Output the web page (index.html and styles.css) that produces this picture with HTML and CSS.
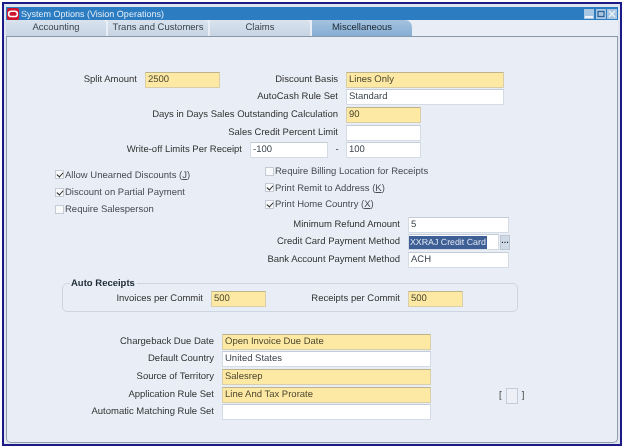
FILE: index.html
```html
<!DOCTYPE html>
<html lang="en">
<head>
<meta charset="utf-8">
<title>System Options</title>
<link rel="stylesheet" href="styles.css">
</head>
<body>
<div class="window">
  <div class="title">
    <span class="logo"><svg width="12" height="12" viewBox="0 0 12 12"><rect width="12" height="12" rx="2" fill="#d0142c"/><rect x="1.6" y="3.2" width="8.8" height="5.4" rx="2.7" fill="none" stroke="#fff" stroke-width="1.5"/></svg></span>
    <span class="title-text">System Options (Vision Operations)</span>
    <span class="controls">
      <svg width="10" height="10" viewBox="0 0 10 10"><rect width="10" height="10" fill="#a9c6e2"/><rect x="1" y="7" width="8" height="2" fill="#eef4fa"/></svg>
      <svg width="10" height="10" viewBox="0 0 10 10"><rect width="10" height="10" fill="#a9c6e2"/><rect x="2" y="2.5" width="6" height="5" fill="none" stroke="#2c5f93" stroke-width="1.2"/></svg>
      <svg width="10" height="10" viewBox="0 0 10 10"><rect width="10" height="10" fill="#a9c6e2"/><path d="M2 2l6 6M8 2l-6 6" stroke="#eef4fa" stroke-width="1.4"/></svg>
    </span>
  </div>
  <div class="tabs">
    <div class="tab">Accounting</div>
    <div class="tab">Trans and Customers</div>
    <div class="tab">Claims</div>
    <div class="tab active">Miscellaneous</div>
  </div>
  <div class="panel">
    <section class="top">
      <div class="row">
        <label class="lab l-split">Split Amount</label>
        <span class="field req w-75">2500</span>
        <label class="lab l-basis">Discount Basis</label>
        <span class="field req w-158">Lines Only</span>
      </div>
      <div class="row">
        <label class="lab l-main">AutoCash Rule Set</label>
        <span class="field w-158">Standard</span>
      </div>
      <div class="row">
        <label class="lab l-main">Days in Days Sales Outstanding Calculation</label>
        <span class="field req w-75">90</span>
      </div>
      <div class="row">
        <label class="lab l-main">Sales Credit Percent Limit</label>
        <span class="field w-75"></span>
      </div>
      <div class="row">
        <label class="lab l-write">Write-off Limits Per Receipt</label>
        <span class="field w-78">-100</span>
        <span class="dash">-</span>
        <span class="field w-75">100</span>
      </div>
    </section>

    <section class="middle">
      <div class="col-left">
        <div class="check"><span class="box on"></span>Allow Unearned Discounts (<u>J</u>)</div>
        <div class="check"><span class="box on"></span>Discount on Partial Payment</div>
        <div class="check"><span class="box"></span>Require Salesperson</div>
      </div>
      <div class="col-right">
        <div class="check tight"><span class="box"></span>Require Billing Location for Receipts</div>
        <div class="check tight"><span class="box on"></span>Print Remit to Address (<u>K</u>)</div>
        <div class="check tight"><span class="box on"></span>Print Home Country (<u>X</u>)</div>
        <div class="refund-rows">
          <div class="row">
            <label class="lab l-refund">Minimum Refund Amount</label>
            <span class="field w-101">5</span>
          </div>
          <div class="row">
            <label class="lab l-refund">Credit Card Payment Method</label>
            <span class="field w-91 flush"><span class="selected">XXRAJ Credit Card</span></span>
            <span class="lov">&#8230;</span>
          </div>
          <div class="row">
            <label class="lab l-refund">Bank Account Payment Method</label>
            <span class="field w-101">ACH</span>
          </div>
        </div>
      </div>
    </section>

    <fieldset class="group">
      <legend>Auto Receipts</legend>
      <div class="row">
        <label class="lab l-inv">Invoices per Commit</label>
        <span class="field req w-55">500</span>
        <label class="lab l-rec">Receipts per Commit</label>
        <span class="field req w-55">500</span>
      </div>
    </fieldset>

    <section class="bottom">
      <div class="bottom-rows">
        <div class="row"><label class="lab l-bot">Chargeback Due Date</label><span class="field req w-209">Open Invoice Due Date</span></div>
        <div class="row"><label class="lab l-bot">Default Country</label><span class="field w-209">United States</span></div>
        <div class="row"><label class="lab l-bot">Source of Territory</label><span class="field req w-209">Salesrep</span></div>
        <div class="row"><label class="lab l-bot">Application Rule Set</label><span class="field req w-209">Line And Tax Prorate</span></div>
        <div class="row"><label class="lab l-bot">Automatic Matching Rule Set</label><span class="field w-209"></span></div>
      </div>
      <div class="flex-slot"><span>[</span><span class="slot"></span><span>]</span></div>
    </section>
  </div>
</div>
</body>
</html>
```
FILE: styles.css
```css
* { box-sizing: border-box; }
html, body { margin: 0; padding: 0; background: #fff; }
body {
  width: 624px;
  height: 448px;
  padding: 2px;
  font: 9.5px/12px "Liberation Sans", Arial, sans-serif;
  text-rendering: geometricPrecision;
  color: #333;
  overflow: hidden;
}
.window {
  width: 620px;
  height: 444px;
  border: 2px solid #1c1a86;
  background: #dfe6f0;
  padding: 3px 2px 0 2px;
  display: flex;
  flex-direction: column;
  filter: blur(0.3px);
}
.title {
  height: 13px;
  background: #2b7cc1;
  color: #e4eef8;
  display: flex;
  align-items: center;
  flex: none;
  font-size: 9px;
}
.logo { display: flex; width: 15px; flex: none; padding-left: 1px; }
.controls { margin-left: auto; display: flex; gap: 1.5px; padding-right: 1px; }
.tabs {
  height: 17px;
  flex: none;
  display: flex;
  gap: 2px;
  background: #e9eef6;
  border-bottom: 1px solid #8a97a6;
}
.tab {
  width: 100px;
  background: linear-gradient(#d9e3ee, #c7d4e3);
  color: #3c4650;
  text-align: center;
  line-height: 16px;
  border-top-right-radius: 4px;
}
.tab.active {
  background: linear-gradient(#a4c2df, #86aed3);
  color: #1e2a36;
  border-top-right-radius: 7px;
}
.panel {
  flex: 1;
  background: #e9eef6;
  border: 1px solid #8f9cad;
  border-top: 0;
  border-radius: 0 0 5px 5px;
  margin-bottom: 1px;
  padding-top: 34px;
  min-height: 0;
}
.row {
  display: flex;
  align-items: center;
  height: 17.6px;
}
.lab { text-align: right; padding-right: 8px; flex: none; white-space: nowrap; }
.l-split { width: 138px; }
.l-basis { width: 126px; }
.l-main { width: 339px; }
.l-write { width: 243px; }
.l-refund { width: 143px; }
.l-inv { width: 148px; }
.l-rec { width: 142px; }
.l-bot { width: 215px; }
.field {
  flex: none;
  height: 16px;
  display: flex;
  align-items: center;
  background: #fff;
  border: 1px solid #d5dbe4;
  border-top-color: #c4ccd6;
  padding: 0 0 0 2px;
  color: #3d4650;
  white-space: nowrap;
  overflow: hidden;
}
.field.flush { padding-left: 0; }
.field.req {
  background: #fde8a4;
  border-color: #d8cfa8;
  border-top-color: #bdb48c;
  color: #4d4a30;
}
.w-55 { width: 55px; }
.w-75 { width: 75px; }
.w-78 { width: 78px; }
.w-91 { width: 91px; }
.w-101 { width: 101px; }
.w-158 { width: 158px; }
.w-209 { width: 209px; }
.dash { width: 18px; text-align: center; flex: none; }
.middle { display: flex; margin-top: 5px; height: 113px; }
.col-left { width: 258px; padding: 3px 0 0 48px; flex: none; }
.col-right { flex: 1; }
.check { display: flex; align-items: center; height: 17.4px; color: #474d55; white-space: nowrap; }
.check.tight { height: 16.6px; }
.box {
  width: 9px;
  height: 9px;
  margin-top: -2px;
  background: #f7f9fb;
  border: 1px solid #c4cbd4;
  margin-right: 1px;
  flex: none;
  position: relative;
}
.box.on::after {
  content: "";
  position: absolute;
  left: 1px;
  top: 1px;
  width: 5px;
  height: 3px;
  border-left: 1.5px solid #222;
  border-bottom: 1.5px solid #222;
  transform: rotate(-48deg);
}
.refund-rows { margin-top: 2px; }
.selected { background: #3e5f95; color: #dfe6f2; padding: 0 1px; line-height: 13px; font-size: 8.8px; }
.lov {
  width: 10px;
  height: 15px;
  margin-left: 1px;
  flex: none;
  background: #cfdae6;
  border: 1px solid #bcc7d4;
  color: #223;
  text-align: center;
  font-weight: bold;
  line-height: 10px;
  font-size: 8px;
}
.group {
  margin: 1px 0 0 55px;
  padding: 1px 0 0;
  width: 456px;
  height: 34px;
  border: 1px solid #cdd5e0;
  border-radius: 5px;
}
.group legend {
  margin-left: 7px;
  padding: 0 2px 0 1px;
  font-weight: bold;
  color: #1e2a36;
  line-height: 11px;
}
.bottom { display: flex; margin-top: 21px; }
.bottom-rows { width: 470px; }
.flex-slot {
  display: flex;
  align-items: center;
  gap: 4px;
  height: 20px;
  margin-top: 53px;
  margin-left: 22px;
  color: #444;
}
.slot { width: 12px; height: 16px; background: #edf1f7; border: 1px solid #c4ccd8; }
```
